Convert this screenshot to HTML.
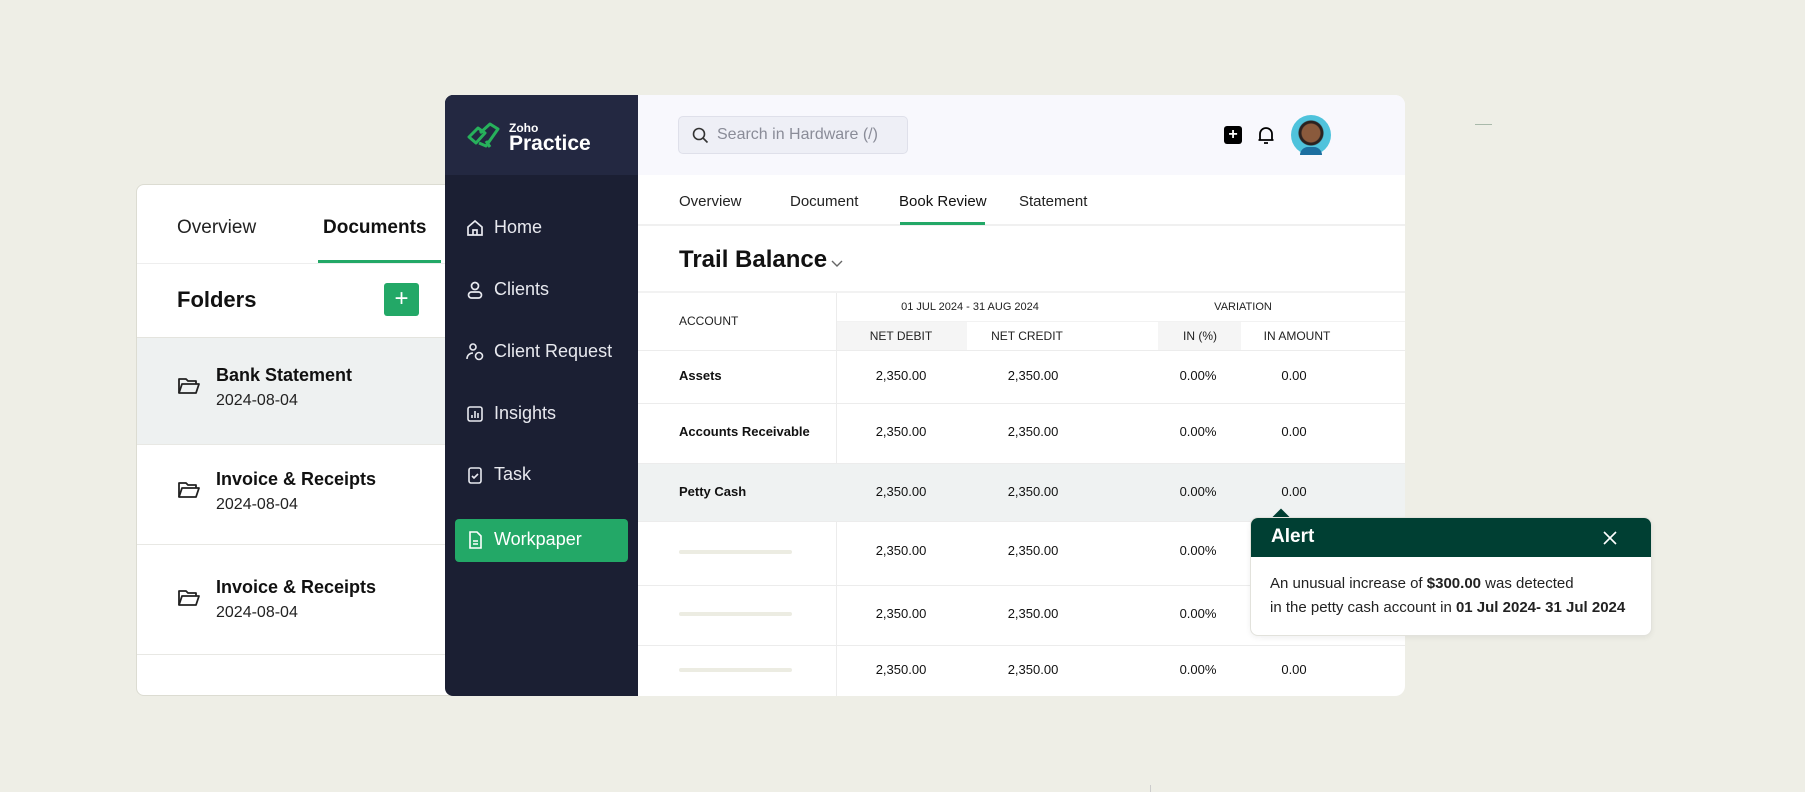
<!DOCTYPE html>
<html><head><meta charset="utf-8"><style>
*{box-sizing:border-box;margin:0;padding:0}
body{width:1805px;height:792px;background:#eeeee6;font-family:"Liberation Sans",sans-serif;position:relative;overflow:hidden;color:#111}
.a{position:absolute}
.lc{left:136px;top:184px;width:320px;height:512px;background:#fff;border:1px solid #dcdcd2;border-radius:8px;overflow:hidden}
.sb{left:445px;top:95px;width:193px;height:601px;background:#1b1f33;border-radius:8px 0 0 8px;overflow:hidden}
.mn{left:638px;top:95px;width:767px;height:601px;background:#fff;border-radius:0 10px 10px 0;overflow:hidden}
.ni{position:absolute;left:20px;color:#e8e9ef;font-size:18px;display:flex;align-items:center;gap:9px}
.t{position:absolute;font-size:13px;transform:translateX(-50%);white-space:nowrap}
.h{position:absolute;font-size:12px;transform:translateX(-50%);white-space:nowrap;color:#222}
.bar{position:absolute;left:41px;width:113px;height:4px;background:#ececE2;border-radius:2px}
</style></head><body>
<div class="a" style="left:1475px;top:124px;width:17px;height:1px;background:#a9b9aa"></div>
<div class="a" style="left:1150px;top:785px;width:1px;height:7px;background:#ccc"></div>

<div class="a lc">
 <div class="a" style="left:40px;top:32px;font-size:19px;color:#222">Overview</div>
 <div class="a" style="left:186px;top:32px;font-size:19px;font-weight:bold;color:#111">Documents</div>
 <div class="a" style="left:181px;top:75px;width:123px;height:3px;background:#23a867"></div>
 <div class="a" style="left:0;top:78px;width:320px;height:1px;background:#eee"></div>
 <div class="a" style="left:40px;top:102px;font-size:22px;font-weight:bold">Folders</div>
 <div class="a" style="left:247px;top:98px;width:35px;height:33px;background:#23a867;border-radius:3px;color:#fff;font-size:24px;text-align:center;line-height:32px">+</div>
 <div class="a" style="left:0;top:152px;width:320px;height:1px;background:#e4e4de"></div>
 <div class="a" style="left:0;top:153px;width:320px;height:106px;background:#eef1f1"></div>
 <div class="a" style="left:0;top:259px;width:320px;height:1px;background:#e8e8e4"></div>
 <div class="a" style="left:0;top:359px;width:320px;height:1px;background:#e8e8e4"></div>
 <div class="a" style="left:0;top:469px;width:320px;height:1px;background:#e8e8e4"></div>
 <svg class="a" style="left:40px;top:191px" width="24" height="20" viewBox="0 0 24 20" fill="none" stroke="#222" stroke-width="1.8" stroke-linejoin="round"><path d="M2 17V3h7l2 2h8v3"/><path d="M2 17l3-9h17l-3 9z"/></svg>
 <div class="a" style="left:79px;top:180px;font-size:18px;font-weight:bold">Bank Statement</div>
 <div class="a" style="left:79px;top:207px;font-size:16px;color:#222">2024-08-04</div>
 <svg class="a" style="left:40px;top:295px" width="24" height="20" viewBox="0 0 24 20" fill="none" stroke="#222" stroke-width="1.8" stroke-linejoin="round"><path d="M2 17V3h7l2 2h8v3"/><path d="M2 17l3-9h17l-3 9z"/></svg>
 <div class="a" style="left:79px;top:284px;font-size:18px;font-weight:bold">Invoice &amp; Receipts</div>
 <div class="a" style="left:79px;top:311px;font-size:16px;color:#222">2024-08-04</div>
 <svg class="a" style="left:40px;top:403px" width="24" height="20" viewBox="0 0 24 20" fill="none" stroke="#222" stroke-width="1.8" stroke-linejoin="round"><path d="M2 17V3h7l2 2h8v3"/><path d="M2 17l3-9h17l-3 9z"/></svg>
 <div class="a" style="left:79px;top:392px;font-size:18px;font-weight:bold">Invoice &amp; Receipts</div>
 <div class="a" style="left:79px;top:419px;font-size:16px;color:#222">2024-08-04</div>
</div>

<div class="a sb">
 <div class="a" style="left:0;top:0;width:193px;height:80px;background:#232841"></div>
 <svg class="a" style="left:20px;top:26px" width="38" height="32" viewBox="0 0 38 32" fill="none" stroke="#27b15b" stroke-width="3" stroke-linejoin="round"><path d="M4 16l9-9 7 5-9 10z"/><path d="M15 12l10-9 8 5-12 17-7-3"/><path d="M21 20l4 6"/></svg>
 <div class="a" style="left:64px;top:26px;color:#fff;font-size:12px;font-weight:bold">Zoho</div>
 <div class="a" style="left:64px;top:37px;color:#fff;font-size:21px;font-weight:bold">Practice</div>
 <div class="ni" style="top:122px"><svg width="20" height="20" viewBox="0 0 20 20" fill="none" stroke="#e8e9ef" stroke-width="1.7"><path d="M3 9l7-6 7 6v8H3z"/><path d="M8 17v-5h4v5"/></svg>Home</div>
 <div class="ni" style="top:184px"><svg width="20" height="20" viewBox="0 0 20 20" fill="none" stroke="#e8e9ef" stroke-width="1.7"><circle cx="10" cy="6" r="3.5"/><rect x="3.5" y="12" width="13" height="6" rx="3"/></svg>Clients</div>
 <div class="ni" style="top:246px"><svg width="20" height="20" viewBox="0 0 20 20" fill="none" stroke="#e8e9ef" stroke-width="1.6"><circle cx="8" cy="5" r="3"/><path d="M2 17c0-4 3-6 6-6"/><circle cx="14" cy="14" r="3.5"/></svg>Client Request</div>
 <div class="ni" style="top:308px"><svg width="20" height="20" viewBox="0 0 20 20" fill="none" stroke="#e8e9ef" stroke-width="1.6"><rect x="3" y="3" width="14" height="14" rx="2"/><path d="M7 14v-3M10 14V7M13 14v-5"/></svg>Insights</div>
 <div class="ni" style="top:369px"><svg width="20" height="20" viewBox="0 0 20 20" fill="none" stroke="#e8e9ef" stroke-width="1.6"><rect x="4" y="3" width="12" height="15" rx="2"/><path d="M7 11l2 2 4-4"/></svg>Task</div>
 <div class="a" style="left:10px;top:424px;width:173px;height:43px;background:#23a867;border-radius:4px"></div>
 <div class="ni" style="top:434px;color:#fff"><svg width="20" height="20" viewBox="0 0 20 20" fill="none" stroke="#fff" stroke-width="1.6"><path d="M5 2h7l4 4v12H5z"/><path d="M8 11h5M8 14h5"/></svg>Workpaper</div>
</div>

<div class="a mn">
 <div class="a" style="left:0;top:0;width:767px;height:80px;background:#f8f8fd"></div>
 <div class="a" style="left:40px;top:21px;width:230px;height:38px;background:#eeeff6;border:1px solid #dfe0ea;border-radius:5px"></div>
 <svg class="a" style="left:54px;top:32px" width="17" height="17" viewBox="0 0 17 17" fill="none" stroke="#333" stroke-width="1.6"><circle cx="7" cy="7" r="5.5"/><path d="M11 11l4.5 4.5"/></svg>
 <div class="a" style="left:79px;top:31px;font-size:16px;color:#8a8c98">Search in Hardware (/)</div>
 <div class="a" style="left:586px;top:31px;width:18px;height:18px;background:#000;border-radius:3px;color:#fff;font-size:16px;font-weight:bold;text-align:center;line-height:18px">+</div>
 <svg class="a" style="left:619px;top:30px" width="18" height="20" viewBox="0 0 18 20" fill="none" stroke="#000" stroke-width="1.8"><path d="M3 15V9a6 6 0 0 1 12 0v6zM1.5 15h15M7 18h4"/></svg>
 <div class="a" style="left:653px;top:20px;width:40px;height:40px;border-radius:50%;background:radial-gradient(circle at 50% 45%,#8a5a3c 0 9px,#2b2220 10px 12px,#4fc3dc 13px)"></div>
 <div class="a" style="left:662px;top:52px;width:22px;height:8px;background:#1c6fa0;border-radius:10px 10px 0 0"></div>
 <div class="a" style="left:41px;top:98px;font-size:15px;color:#222">Overview</div>
 <div class="a" style="left:152px;top:98px;font-size:15px;color:#222">Document</div>
 <div class="a" style="left:261px;top:98px;font-size:15px;color:#111">Book Review</div>
 <div class="a" style="left:381px;top:98px;font-size:15px;color:#222">Statement</div>
 <div class="a" style="left:0;top:129px;width:767px;height:2px;background:#f0f0f0"></div>
 <div class="a" style="left:262px;top:127px;width:85px;height:3px;background:#23a867"></div>
 <div class="a" style="left:41px;top:151px;font-size:24px;font-weight:bold">Trail Balance</div>
 <svg class="a" style="left:193px;top:165px" width="12" height="8" viewBox="0 0 12 8" fill="none" stroke="#666" stroke-width="1.4"><path d="M1 1l5 5 5-5"/></svg>
 <div class="a" style="left:0;top:196px;width:767px;height:2px;background:#f2f2f2"></div>
 <div class="a" style="left:198px;top:198px;width:1px;height:403px;background:#ececec"></div>
 <div class="a" style="left:199px;top:226px;width:568px;height:1px;background:#f2f2f2"></div>
 <div class="a" style="left:199px;top:227px;width:130px;height:28px;background:#f5f5f5"></div>
 <div class="a" style="left:520px;top:227px;width:83px;height:28px;background:#f5f5f5"></div>
 <div class="a" style="left:41px;top:219px;font-size:12px;color:#222">ACCOUNT</div>
 <div class="h" style="left:332px;top:206px;font-size:11px">01 JUL 2024 - 31 AUG 2024</div>
 <div class="h" style="left:605px;top:206px;font-size:11px">VARIATION</div>
 <div class="h" style="left:263px;top:234px">NET DEBIT</div>
 <div class="h" style="left:389px;top:234px">NET CREDIT</div>
 <div class="h" style="left:562px;top:234px">IN (%)</div>
 <div class="h" style="left:659px;top:234px">IN AMOUNT</div>
 <div class="a" style="left:0;top:255px;width:767px;height:1px;background:#ececec"></div>
 <div class="a" style="left:0;top:308px;width:767px;height:1px;background:#ececec"></div>
 <div class="a" style="left:0;top:368px;width:767px;height:58px;background:#eff2f2"></div>
 <div class="a" style="left:0;top:368px;width:767px;height:1px;background:#ececec"></div>
 <div class="a" style="left:0;top:426px;width:767px;height:1px;background:#ececec"></div>
 <div class="a" style="left:0;top:490px;width:767px;height:1px;background:#ececec"></div>
 <div class="a" style="left:0;top:550px;width:767px;height:1px;background:#ececec"></div>
 <div class="a" style="left:41px;top:273px;font-size:13px;font-weight:bold">Assets</div>
 <div class="a" style="left:41px;top:329px;font-size:13px;font-weight:bold">Accounts Receivable</div>
 <div class="a" style="left:41px;top:389px;font-size:13px;font-weight:bold">Petty Cash</div>
 <div class="bar" style="top:455px"></div>
 <div class="bar" style="top:517px"></div>
 <div class="bar" style="top:573px"></div>
 <div class="t" style="left:263px;top:273px">2,350.00</div><div class="t" style="left:395px;top:273px">2,350.00</div><div class="t" style="left:560px;top:273px">0.00%</div><div class="t" style="left:656px;top:273px">0.00</div>
 <div class="t" style="left:263px;top:329px">2,350.00</div><div class="t" style="left:395px;top:329px">2,350.00</div><div class="t" style="left:560px;top:329px">0.00%</div><div class="t" style="left:656px;top:329px">0.00</div>
 <div class="t" style="left:263px;top:389px">2,350.00</div><div class="t" style="left:395px;top:389px">2,350.00</div><div class="t" style="left:560px;top:389px">0.00%</div><div class="t" style="left:656px;top:389px">0.00</div>
 <div class="t" style="left:263px;top:448px">2,350.00</div><div class="t" style="left:395px;top:448px">2,350.00</div><div class="t" style="left:560px;top:448px">0.00%</div>
 <div class="t" style="left:263px;top:511px">2,350.00</div><div class="t" style="left:395px;top:511px">2,350.00</div><div class="t" style="left:560px;top:511px">0.00%</div>
 <div class="t" style="left:263px;top:567px">2,350.00</div><div class="t" style="left:395px;top:567px">2,350.00</div><div class="t" style="left:560px;top:567px">0.00%</div><div class="t" style="left:656px;top:567px">0.00</div>
</div>

<div class="a" style="left:1275px;top:511px;width:12px;height:12px;background:#003f33;transform:rotate(45deg)"></div>
<div class="a" style="left:1250px;top:517px;width:402px;height:119px;background:#fff;border:1px solid #e2e2dc;border-radius:8px;overflow:hidden;box-shadow:0 2px 6px rgba(0,0,0,.06)">
 <div class="a" style="left:0;top:0;width:402px;height:39px;background:#003f33"></div>
 <div class="a" style="left:20px;top:8px;color:#fff;font-size:19px;font-weight:bold">Alert</div>
 <svg class="a" style="left:352px;top:13px" width="14" height="14" viewBox="0 0 14 14" stroke="#fff" stroke-width="1.6"><path d="M1 1l12 12M13 1L1 13"/></svg>
 <div class="a" style="left:19px;top:54px;font-size:15px;line-height:24px;color:#222;white-space:nowrap">An unusual increase of <b>$300.00</b> was detected<br>in the petty cash account in <b>01 Jul 2024- 31 Jul 2024</b></div>
</div>
</body></html>
